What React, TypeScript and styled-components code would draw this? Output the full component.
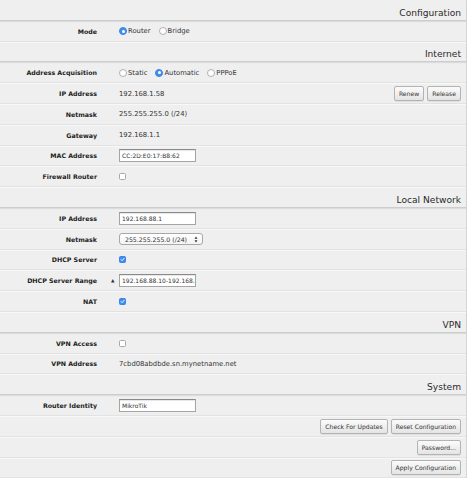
import React from "react";
import styled, { createGlobalStyle } from "styled-components";

const Global = createGlobalStyle`
  html, body { margin: 0; padding: 0; background: #ffffff; }
  body { font-family: "DejaVu Sans", Verdana, sans-serif; color: #333; }
`;

const Panel = styled.div`
  width: 467px;
  background: #efefef;
  border-right: 1px solid #d6d6d6;
  box-sizing: border-box;
`;

const RowBase = styled.div`
  height: 20.8px;
  box-sizing: border-box;
  border-bottom: 1px solid #e2e2e2;
  box-shadow: 0 1px 0 #f8f8f8;
`;

const HeaderRow = styled(RowBase)`
  display: flex;
  align-items: flex-end;
  justify-content: flex-end;
  padding: 0 5px 0 0;
  border-bottom: 1px solid #cdcdcd;
  box-shadow: 0 1px 1px rgba(0, 0, 0, 0.08);
  font-size: 9.1px;
  line-height: 13px;
  color: #2a2a2a;
  position: relative;
  z-index: 1;
`;

const FieldRow = styled(RowBase)`
  display: grid;
  grid-template-columns: 97px 1fr auto;
  column-gap: 22px;
  align-items: center;
  padding: 1px 5px 0 0;
`;

const ButtonRow = styled(RowBase)`
  display: flex;
  align-items: center;
  justify-content: flex-end;
  gap: 3px;
  padding: 1px 5px 0 0;
`;

const Label = styled.div`
  text-align: right;
  font-weight: bold;
  font-size: 6.3px;
  color: #1e1e1e;
  white-space: nowrap;
`;

const Value = styled.div`
  display: flex;
  align-items: center;
  font-size: 6.8px;
  color: #333;
  white-space: nowrap;
  min-width: 0;
`;

const Actions = styled.div`
  display: flex;
  gap: 3px;
`;

const Button = styled.button`
  height: 15px;
  padding: 0 4px;
  border: 1px solid #b3b3b3;
  border-radius: 2px;
  background: linear-gradient(#fbfbfb, #e4e4e4);
  box-shadow: 0 1px 0 rgba(0, 0, 0, 0.06);
  font-family: "DejaVu Sans", Verdana, sans-serif;
  font-size: 6.1px;
  color: #333;
  line-height: 13px;
`;

const TextInput = styled.div`
  width: 77px;
  height: 13px;
  box-sizing: border-box;
  border: 1px solid #a5a5a5;
  border-top-color: #8a8a8a;
  background: #fff;
  box-shadow: inset 0 1px 1px rgba(0, 0, 0, 0.1);
  font-size: 6px;
  line-height: 11px;
  padding: 0 2px;
  overflow: hidden;
  white-space: nowrap;
  color: #333;
`;

const Select = styled.div`
  width: 84px;
  height: 12px;
  box-sizing: border-box;
  border: 1px solid #a8a8a8;
  border-radius: 3px;
  background: linear-gradient(#ffffff, #f3f3f3);
  display: flex;
  align-items: center;
  justify-content: space-between;
  padding: 0 4px 0 5px;
  font-size: 6.2px;
  color: #333;
`;

const Caret = styled.span`
  margin-left: -8px;
  margin-right: 3px;
  font-size: 4.5px;
  color: #333;
  width: 5px;
`;

const Box = styled.span<{ $on?: boolean }>`
  width: 7px;
  height: 7px;
  box-sizing: border-box;
  border-radius: 1.5px;
  border: 1px solid ${(p) => (p.$on ? "#3a86e8" : "#a9a9a9")};
  background: ${(p) => (p.$on ? "#3d8ef2" : "#fff")};
  display: inline-flex;
  align-items: center;
  justify-content: center;
`;

const RadioGroup = styled.div`
  display: flex;
  align-items: center;
  gap: 8px;
`;

const RadioOpt = styled.span`
  display: inline-flex;
  align-items: center;
  gap: 1px;
`;

const RadioDot = styled.span<{ $on?: boolean }>`
  width: 8px;
  height: 8px;
  box-sizing: border-box;
  border-radius: 50%;
  border: 1px solid ${(p) => (p.$on ? "#3a84e6" : "#b0b0b0")};
  background: ${(p) => (p.$on ? "#3f8ff3" : "#fff")};
  display: inline-flex;
  align-items: center;
  justify-content: center;
  &::after {
    content: "";
    width: 3px;
    height: 3px;
    border-radius: 50%;
    background: ${(p) => (p.$on ? "#fff" : "transparent")};
  }
`;

const Check = () => (
  <svg width="5" height="5" viewBox="0 0 10 10">
    <path d="M2 5.2 L4.2 7.4 L8.2 2.6" fill="none" stroke="#fff" strokeWidth="1.8" strokeLinecap="round" strokeLinejoin="round" />
  </svg>
);

const Arrows = () => (
  <svg width="4" height="7" viewBox="0 0 8 14">
    <path d="M4 1 L7 5.5 H1 Z" fill="#333" />
    <path d="M4 13 L7 8.5 H1 Z" fill="#333" />
  </svg>
);

const Radios = ({ options, selected }: { options: string[]; selected: string }) => (
  <RadioGroup>
    {options.map((o) => (
      <RadioOpt key={o}>
        <RadioDot $on={o === selected} />
        {o}
      </RadioOpt>
    ))}
  </RadioGroup>
);

const Field = ({ label, children, actions }: { label: string; children?: React.ReactNode; actions?: React.ReactNode }) => (
  <FieldRow>
    <Label>{label}</Label>
    <Value>{children}</Value>
    <Actions>{actions}</Actions>
  </FieldRow>
);

export default function App() {
  return (
    <>
      <Global />
      <Panel>
        <HeaderRow>Configuration</HeaderRow>
        <Field label="Mode">
          <Radios options={["Router", "Bridge"]} selected="Router" />
        </Field>
        <HeaderRow>Internet</HeaderRow>
        <Field label="Address Acquisition">
          <Radios options={["Static", "Automatic", "PPPoE"]} selected="Automatic" />
        </Field>
        <Field
          label="IP Address"
          actions={
            <>
              <Button>Renew</Button>
              <Button>Release</Button>
            </>
          }
        >
          192.168.1.58
        </Field>
        <Field label="Netmask">255.255.255.0 (/24)</Field>
        <Field label="Gateway">192.168.1.1</Field>
        <Field label="MAC Address">
          <TextInput>CC:2D:E0:17:B8:62</TextInput>
        </Field>
        <Field label="Firewall Router">
          <Box />
        </Field>
        <HeaderRow>Local Network</HeaderRow>
        <Field label="IP Address">
          <TextInput>192.168.88.1</TextInput>
        </Field>
        <Field label="Netmask">
          <Select>
            <span>255.255.255.0 (/24)</span>
            <Arrows />
          </Select>
        </Field>
        <Field label="DHCP Server">
          <Box $on>
            <Check />
          </Box>
        </Field>
        <Field label="DHCP Server Range">
          <Caret>▲</Caret>
          <TextInput>192.168.88.10-192.168.88.254</TextInput>
        </Field>
        <Field label="NAT">
          <Box $on>
            <Check />
          </Box>
        </Field>
        <HeaderRow>VPN</HeaderRow>
        <Field label="VPN Access">
          <Box />
        </Field>
        <Field label="VPN Address">7cbd08abdbde.sn.mynetname.net</Field>
        <HeaderRow>System</HeaderRow>
        <Field label="Router Identity">
          <TextInput>MikroTik</TextInput>
        </Field>
        <ButtonRow>
          <Button>Check For Updates</Button>
          <Button>Reset Configuration</Button>
        </ButtonRow>
        <ButtonRow>
          <Button>Password...</Button>
        </ButtonRow>
        <ButtonRow>
          <Button>Apply Configuration</Button>
        </ButtonRow>
      </Panel>
    </>
  );
}
